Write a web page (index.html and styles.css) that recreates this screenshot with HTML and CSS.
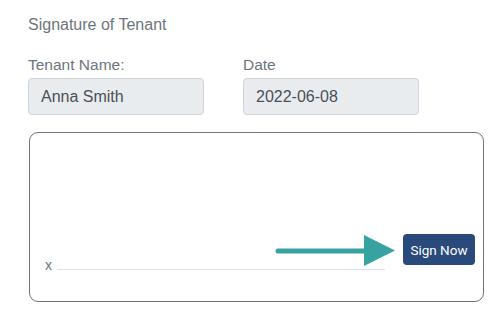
FILE: index.html
```html
<!DOCTYPE html>
<html lang="en">
<head>
    <meta charset="UTF-8">
    <meta name="viewport" content="width=device-width, initial-scale=1.0">
    <title>Signature of Tenant</title>
    <link rel="stylesheet" href="styles.css">
</head>
<body>

    <div class="signature-section">
        <h2 class="section-title">Signature of Tenant</h2>

        <div class="fields">
            <div class="field">
                <label for="tenantName">Tenant Name:</label>
                <input id="tenantName" type="text" value="Anna Smith" readonly>
            </div>
            <div class="field">
                <label for="signDate">Date</label>
                <input id="signDate" type="text" value="2022-06-08" readonly>
            </div>
        </div>

        <div class="sign-box">
            <div class="sign-row">
                <div class="sign-line">
                    <span class="sign-x">x</span>
                    <span class="sign-rule"></span>
                </div>
                <button class="sign-button">Sign Now</button>
            </div>

            <svg class="sign-arrow" width="122" height="32" viewBox="0 0 122 32">
                <line x1="3" y1="17" x2="92" y2="17" stroke="#37a3a0" stroke-width="5" stroke-linecap="round"/>
                <polygon points="89,1 120,16.5 89,32" fill="#37a3a0"/>
            </svg>
        </div>
    </div>

</body>
</html>
```

FILE: styles.css
```css
body {
    margin: 0;
    font-family: "Liberation Sans", Arial, sans-serif;
    background: #ffffff;
    color: #6c757d;
}

.signature-section {
    padding: 13px 15px 0 28px;
}

.section-title {
    margin: 0 0 16px;
    font-size: 16px;
    font-weight: normal;
    line-height: 24px;
    color: #6c757d;
}

.fields {
    display: grid;
    grid-template-columns: 176px 176px;
    gap: 39px;
}

.field label {
    display: block;
    font-size: 15.5px;
    line-height: 24px;
    margin-bottom: 1px;
    color: #6c757d;
}

.field input {
    display: block;
    box-sizing: border-box;
    width: 100%;
    height: 37px;
    padding: 6px 12px;
    font-family: inherit;
    font-size: 16px;
    color: #495057;
    background-color: #e9ecef;
    border: 1px solid #ced4da;
    border-radius: 4px;
    outline: none;
}

.sign-box {
    position: relative;
    box-sizing: border-box;
    width: 455px;
    height: 170px;
    margin: 17px 0 0 1px;
    border: 1px solid #6c757d;
    border-radius: 9px;
    display: flex;
    flex-direction: column;
    justify-content: flex-end;
}

.sign-row {
    display: flex;
    align-items: flex-end;
    padding: 0 8px 36px 15px;
}

.sign-line {
    display: flex;
    align-items: baseline;
    width: 340px;
    margin-bottom: -8px;
}

.sign-x {
    font-size: 14px;
    line-height: 16px;
    color: #6c757d;
    margin-right: 5px;
}

.sign-rule {
    flex: 1;
    border-bottom: 1px solid #dee2e6;
}

.sign-button {
    margin-left: auto;
    width: 72px;
    height: 31px;
    padding: 0;
    font-family: Roboto, "Liberation Sans", sans-serif;
    font-size: 13.5px;
    font-weight: 400;
    color: #ffffff;
    background-color: #294a7a;
    border: none;
    border-radius: 4px;
    cursor: pointer;
}

.sign-arrow {
    position: absolute;
    left: 245px;
    top: 101px;
}
```
